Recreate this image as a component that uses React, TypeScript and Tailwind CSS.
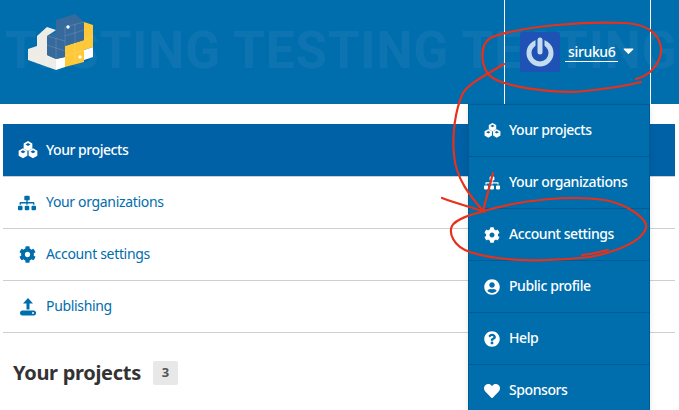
import type { ReactNode } from "react";
import { FaCaretDown, FaCog, FaHeart, FaQuestionCircle, FaSitemap, FaUserCircle } from "react-icons/fa";

const font = "font-['Noto_Sans','Open_Sans',sans-serif]";

function CubesIcon({ size }: { size: number }) {
  return (
    <svg width={size} height={size * 0.87} viewBox="0 0 20 17.400" fill="currentColor" fillRule="evenodd">
      <path d="M10 0L14.350 2.500V7.500L10 10L5.650 7.500V2.500ZM10 2L12.500 3.500L10 5L7.500 3.500Z" />
      <path d="M5 7.300L9.350 9.800V14.800L5 17.300L.650 14.800V9.800ZM5 9.300L7.500 10.800L5 12.300L2.500 10.800Z" />
      <path d="M15 7.300L19.350 9.800V14.800L15 17.300L10.650 14.800V9.800ZM15 9.300L17.500 10.800L15 12.300L12.500 10.800Z" />
    </svg>
  );
}

function PublishIcon() {
  return (
    <svg width="16" height="18" viewBox="0 0 16 18" fill="currentColor" className="ml-[2px]">
      <path d="M8 0L13 5.500H9.500V11.500H6.500V5.500H3Z" />
      <rect x="0" y="12.500" width="16" height="5" rx="2.500" />
      <circle cx="13" cy="15" r="1" fill="#ffffff" />
    </svg>
  );
}

function Logo() {
  return (
    <svg width="70" height="62" viewBox="26 12 70 62" className="shrink-0">
      {/* white steps */}
      <polygon points="28,49 37,46 37,36 47,27 56,30 47,36 47,55 56,59 56,70 28,60" fill="#eeece6" />
      <polygon points="56,59 65,57 65,67 56,70" fill="#ffffff" />
      <polygon points="84,50 93,47 93,57 84,60" fill="#ffffff" />
      {/* yellow */}
      <polygon points="84,22 93,25 93,47 84,50 84,62 65,67 65,46 84,40" fill="#ffc838" />
      {/* blue */}
      <polygon points="56,20 75,14 84,22 84,40 65,46 65,57 56,59 47,55 47,36 56,33" fill="#376a9c" />
      <g stroke="#ffffff" strokeOpacity="0.22" strokeWidth="0.6" fill="none">
        <path d="M65 27V46M75 24V43M56 38V59M47 45L65 51M65 36L84 30M65 27L84 22M47 36L65 41" />
        <path d="M37 46V64M47 55V67M28 54L47 60M75 43V64M84 40L93 36M65 56L84 50" />
      </g>
      <circle cx="68" cy="27" r="1.700" fill="#ffffff" />
      <circle cx="80" cy="57" r="1.700" fill="#ffffff" />
    </svg>
  );
}

function Avatar() {
  return (
    <div className="flex h-10 w-10 shrink-0 items-center justify-center rounded-[2px] bg-[#1e52b5]">
      <svg width="30" height="30" viewBox="0 0 30 30" fill="none" stroke="#c5dcef" strokeWidth="5">
        <circle cx="15" cy="16" r="11" />
        <path d="M15 2V15" stroke="#1e52b5" strokeWidth="9" />
        <path d="M15 3V15" strokeLinecap="round" />
      </svg>
    </div>
  );
}

function Row({ icon, label, active }: { icon: ReactNode; label: string; active?: boolean }) {
  return (
    <div
      className={
        active
          ? "flex h-[53px] items-center border-b border-[#cfcfcf] bg-[#0061a6] pl-[15px] text-white"
          : "flex h-[52px] items-center border-b border-[#cfcfcf] pl-[15px] text-[#006dad]"
      }
    >
      <span className="flex w-[28px] items-center text-[18px]">{icon}</span>
      <span className={active ? "-mt-[2px] text-[14px] font-medium tracking-[-0.45px]" : "-mt-[2px] text-[14px] tracking-[-0.33px]"}>{label}</span>
    </div>
  );
}

function MenuItem({ icon, label }: { icon: ReactNode; label: string }) {
  return (
    <div className="flex h-[52px] shrink-0 items-center border-b border-[#005c95] pl-[15px] text-white">
      <span className="flex w-[25px] items-center text-[16px]">{icon}</span>
      <span className="-mt-[2px] text-[14px] font-medium tracking-[-0.42px]">{label}</span>
    </div>
  );
}

export default function App() {
  return (
    <div className={`relative h-[410px] w-[679px] overflow-hidden bg-white ${font}`}>
      <header className="relative flex h-[104px] items-start overflow-hidden bg-[#006dad]">
        <div className="absolute left-[5px] top-[25px] whitespace-nowrap font-['Roboto',sans-serif] text-[51px] font-bold leading-[52px] tracking-[1px] text-white/[0.05]">
          TESTING TESTING TESTING
        </div>
        <div className="relative ml-[26px] mt-[12px]">
          <Logo />
        </div>
        <div className="relative ml-auto mr-[28px] flex h-[104px] w-[147px] items-center border-x border-white pl-[15px] text-white">
          <Avatar />
          <span className="ml-[5px] border-b border-white px-[3px] text-[14px] leading-[18px] font-medium tracking-[-0.35px]">siruku6</span>
          <FaCaretDown className="-mt-[3px] ml-[2px] text-[17px]" />
        </div>
      </header>

      <main className="pl-[3px] pr-[4px] pt-[20px]">
        <Row active icon={<CubesIcon size={20} />} label="Your projects" />
        <Row icon={<FaSitemap />} label="Your organizations" />
        <Row icon={<FaCog className="ml-[1px] text-[17px]" />} label="Account settings" />
        <Row icon={<PublishIcon />} label="Publishing" />
        <div className="mt-[25px] flex items-center pl-[10px]">
          <h1 className="text-[20px] font-bold tracking-[-0.3px] text-[#333333]">Your projects</h1>
          <span className="ml-[12px] flex h-[24px] w-[25px] items-center justify-center rounded-[2px] bg-[#e8e8e8] text-[13px] font-bold text-[#555555]">3</span>
        </div>
      </main>

      {/* dropdown */}
      <div className="absolute left-[468px] top-[104px] flex h-[310px] w-[182px] flex-col overflow-hidden border-x border-t border-[#005c95] bg-[#006dad] shadow-[0_2px_6px_rgba(0,0,0,0.1)]">
        <MenuItem icon={<CubesIcon size={17} />} label="Your projects" />
        <MenuItem icon={<FaSitemap />} label="Your organizations" />
        <MenuItem icon={<FaCog />} label="Account settings" />
        <MenuItem icon={<FaUserCircle />} label="Public profile" />
        <MenuItem icon={<FaQuestionCircle />} label="Help" />
        <MenuItem icon={<FaHeart />} label="Sponsors" />
      </div>

      {/* hand-drawn annotation */}
      <svg className="pointer-events-none absolute inset-0" width="679" height="410" fill="none" stroke="#e8311a" strokeWidth="2.2" strokeLinecap="round">
        <path d="M636 79C650 76 662 62 661 48C659 32 645 24 625 23C585 21 525 26 495 36C478 41 481 64 488 74C500 88 560 94 585 91C605 89 625 86 641 82" />
        <path d="M504 64C490 73 470 82 463 93C455 110 452 135 454 155C456 180 472 198 484 212" />
        <path d="M442 198C455 203 470 207 483 211L493 173" />
        <path d="M484 211C520 200 570 195 605 200C630 205 648 220 646 228C642 242 615 252 590 257C550 262 500 262 470 252C452 246 449 232 452 226C456 219 470 215 484 211" />
        <path d="M582 255C592 254 600 252 608 250" />
      </svg>
    </div>
  );
}
